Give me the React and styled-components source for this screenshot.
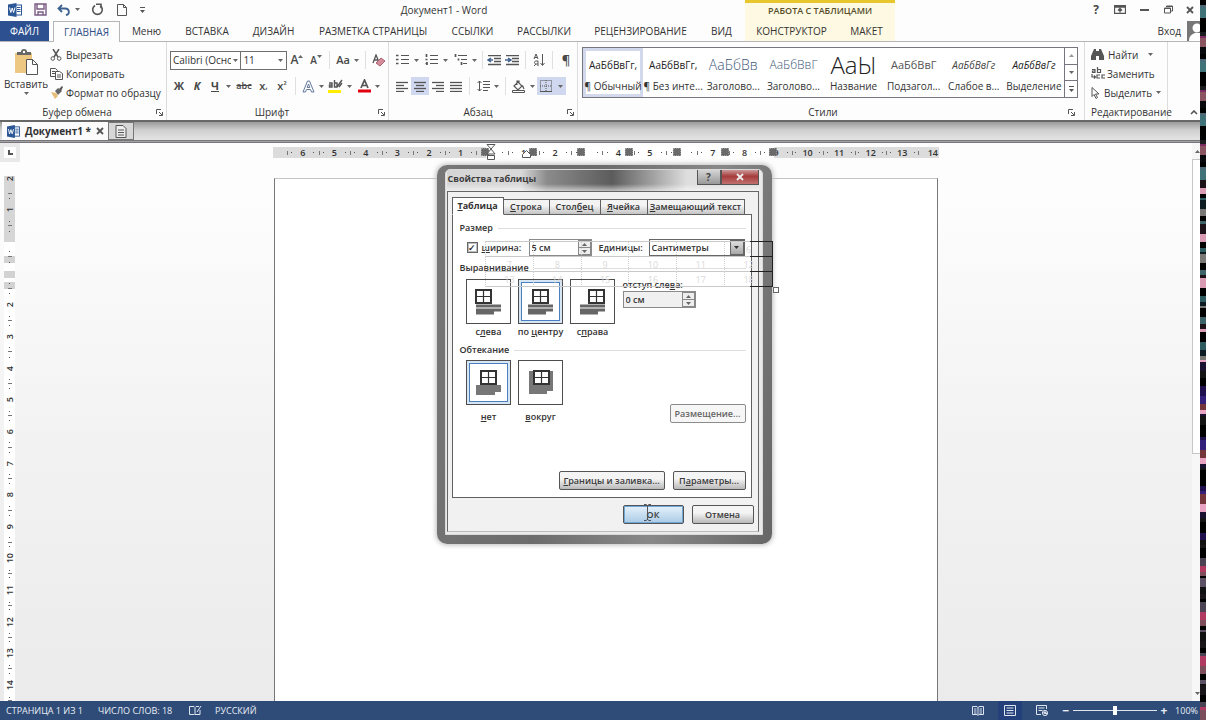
import React from "react";
import styled, { createGlobalStyle, css } from "styled-components";

const Global = createGlobalStyle`
  * { box-sizing: border-box; }
  body { margin: 0; background: #fff; font-family: "Open Sans", "Noto Sans", sans-serif; font-size: 10px; color: #333; }
  button, input, select { font: inherit; color: inherit; margin: 0; padding: 0; border: 0; background: none; border-radius: 0; }
  a { color: inherit; text-decoration: none; }
  fieldset { border: 0; margin: 0; padding: 0; min-width: 0; }
  svg { display: block; flex: none; }
`;

/* ---------- frame ---------- */
const Shell = styled.div`
  display: grid; grid-template-columns: minmax(0, 1fr) 6px; min-height: 100vh; overflow: hidden;
`;
const Window = styled.div`display: flex; flex-direction: column; min-width: 0; background: #fdfdfd;`;
const Edge = styled.div`background: ${p => p.$bands};`;

/* ---------- title bar ---------- */
const TitleBar = styled.header`
  display: grid; grid-template-columns: 143px minmax(0, 1fr) 150px 305px; height: 21px;
`;
const QuickAccess = styled.div`display: flex; align-items: center; padding: 0 0 2px 8px;`;
const TitleText = styled.h1`margin: 0; font-size: 10px; line-height: 21px; font-weight: 400; text-align: center;`;
const ToolHeading = styled.div`
  background: #fef9e2; border-top: 3px solid #e8c72e; font-size: 9px; line-height: 16px; font-weight: 600; text-align: center; color: #574e2b;
`;
const WindowButtons = styled.div`display: flex; align-items: center; justify-content: flex-end; padding-bottom: 2px;`;
const IconButton = styled.button`
  display: flex; align-items: center; justify-content: center; flex: none;
  width: ${p => p.$w || 18}px; height: ${p => p.$h || 18}px;
  background: ${p => (p.$on ? "#cfd8ee" : "transparent")};
`;
const Raised = styled.span`align-self: flex-start; padding-top: 4px;`;

/* ---------- ribbon tabs ---------- */
const TabRow = styled.nav`display: flex; height: 21px; border-bottom: 1px solid #b5b5b5;`;
const RibbonTab = styled.a`
  display: flex; align-items: center; justify-content: center; flex: none; width: ${p => p.$w}px; height: 20px; white-space: nowrap;
  ${p => p.$kind === "file" && css`background: #2c5090; color: #fff; margin-right: 4px;`}
  ${p => p.$kind === "active" && css`height: 21px; background: #fdfdfd; border: 1px solid #b5b5b5; border-bottom: 0; color: #2f4f86;`}
  ${p => p.$kind === "tool" && css`background: #fef9e2;`}
`;
const SignIn = styled.a`margin-left: auto; margin-right: 6px; line-height: 20px;`;

/* ---------- ribbon ---------- */
const Ribbon = styled.section`display: flex; height: 78px; background: #fdfdfd;`;
const Group = styled.section`
  display: flex; flex-direction: column; flex: ${p => (p.$grow ? "1 1 0" : "none")}; min-width: 0;
  width: ${p => (p.$w ? p.$w + "px" : "auto")}; padding: ${p => p.$pad || "5px 0 0 4px"};
  border-right: 1px solid #dcdcdc;
`;
const GroupBody = styled.div`flex: 1; display: flex; flex-direction: ${p => (p.$col ? "column" : "row")};`;
const GroupFoot = styled.footer`display: flex; align-items: center; height: 16px;`;
const GroupName = styled.h2`flex: 1; margin: 0; font-size: 10px; font-weight: 400; text-align: center; white-space: nowrap;`;
const PasteButton = styled.button`display: flex; flex-direction: column; align-items: center; justify-content: flex-start; width: 48px; padding-top: 4px; line-height: 16px;`;
const Commands = styled.div`display: flex; flex-direction: column; align-items: flex-start;`;
const Command = styled.button`
  display: flex; align-items: center; gap: ${p => p.$gap || 2}px; height: 19px; white-space: nowrap;
`;
const ToolRow = styled.div`display: flex; align-items: center; height: 26px;`;
const Divider = styled.i`width: 1px; height: 18px; background: #e0e0e0; margin: 0 ${p => p.$m || 5}px;`;
const Combo = styled.label`
  display: flex; align-items: center; width: ${p => p.$w}px; height: 19px; border: 1px solid #6f6f6f; background: #fff; margin-left: ${p => (p.$join ? -1 : 0)}px;
`;
const ComboInput = styled.input`flex: 1; width: 0; min-width: 0; padding-left: 2px; outline: 0;`;
const Glyph = styled.span`
  font-weight: ${p => (p.$b ? 700 : 600)}; font-style: ${p => (p.$i ? "italic" : "normal")}; font-size: ${p => p.$s || 11}px; line-height: 14px;
  text-decoration: ${p => p.$d || "none"}; color: ${p => p.$c || "#484848"};
`;

const Gallery = styled.div`display: flex; height: 51px; border: 1px solid #76767e; background: #fff;`;
const StyleCard = styled.button`
  display: flex; flex-direction: column; justify-content: flex-start; flex: 1 1 0; min-width: 0; overflow: hidden; padding-top: 4px; text-align: center;
  box-shadow: ${p => (p.$on ? "inset 0 0 0 3px #d3d9ec" : "none")};
`;
const Sample = styled.span`
  display: block; height: 26px; line-height: 26px; margin: 0 5px; overflow: hidden; white-space: nowrap; align-self: stretch;
  font-size: ${p => p.$s || 10}px; font-weight: ${p => p.$wt || 400}; color: ${p => p.$c || "#222"}; font-style: ${p => (p.$i ? "italic" : "normal")};
`;
const StyleName = styled.span`align-self: stretch; line-height: 16px; white-space: nowrap;`;
const GalleryArrows = styled.div`display: flex; flex-direction: column; width: 13px; border-left: 1px solid #76767e;`;
const ArrowCell = styled.button`
  flex: 1; display: flex; align-items: center; justify-content: center;
  & + & { border-top: 1px solid #76767e; }
`;
const Collapse = styled.div`display: flex; align-items: flex-end; justify-content: flex-end; width: 32px;`;

/* ---------- document tabs ---------- */
const DocTabs = styled.nav`
  display: flex; align-items: flex-end; height: 23px; padding-left: 2px; border-top: 2px solid #676767; border-bottom: 3px double #77757b;
  background: linear-gradient(#9a9a9a, #cfcfcf 45%, #e4e4e4);
`;
const DocTab = styled.a`
  display: flex; align-items: center; justify-content: space-between; width: 106px; height: 18px; padding: 0 4px 0 5px; background: #fbfbfb; font-weight: 700; white-space: nowrap;
`;
const NewDoc = styled.button`display: flex; align-items: center; justify-content: center; width: 26px; height: 18px; border: 1px solid #777; background: #d7d7d7;`;

/* ---------- work area ---------- */
const Work = styled.main`
  position: relative; flex: 1; display: flex; background: linear-gradient(#fdfdfd 10%, #f3f3f3 50%, #ebebeb);
`;
const LeftRail = styled.div`display: flex; flex-direction: column; width: 20px;`;
const TabStop = styled.button`
  display: flex; align-items: center; justify-content: center; width: 20px; height: 19px; margin-bottom: 14px; border: 4px solid #e9e9e9; background: #fff;
`;
const VRuler = styled.div`
  flex: 1; display: grid; grid-template-rows: 18px repeat(16, minmax(0, 1fr)); width: 11px; margin-left: 4px; font-size: 9px; font-weight: 600;
  background: linear-gradient(#d6d6d6 66px, #fff 66px 80px, #d2d2d2 80px 87px, #fff 87px 95px, #d2d2d2 95px 102px, #fff 102px 106px, #d2d2d2 106px 113px, #fff 113px);
`;
const VMark = styled.div`
  display: flex; flex-direction: column-reverse; align-items: center; justify-content: ${p => (p.$short ? "flex-end" : "space-around")};
  background: linear-gradient(#777, #777) center bottom / 4px 1px no-repeat;
`;
const VNum = styled.span`writing-mode: vertical-rl; rotate: 180deg; line-height: 11px;`;
const Dot = styled.i`width: 1px; height: 1px; background: #555;`;
const Canvas = styled.div`flex: 1; display: flex; flex-direction: column; align-items: center; min-width: 0;`;
const HRuler = styled.div`
  position: relative; display: grid; grid-template-columns: 14px repeat(20, minmax(0, 1fr)) 20px; width: 666px; max-width: 100%; height: 11px; margin: 4px 0 20px;
  padding-right: 1px; font-size: 9px; font-weight: 600; background: linear-gradient(90deg, #dcdcdc 213px, #fff 213px 501px, #dcdcdc 501px);
`;
const HMark = styled.div`
  display: flex; align-items: center; justify-content: ${p => (p.$end ? "flex-end" : "space-around")}; line-height: 10px;
  background: linear-gradient(#777, #777) left center / 1px 4px no-repeat;
`;
const Columns = styled.div`position: absolute; left: 208px; top: 1px; display: flex; gap: 40px;`;
const ColumnGrip = styled.i`width: 8px; height: 8px; background: #6a6a6a; border: 1px dotted #999;`;
const Indent = styled.div`position: absolute; left: 213px; top: -3px;`;
const FirstIndent = styled.div`position: absolute; left: 249px; top: 3px;`;
const Sheet = styled.article`
  flex: 1; width: 664px; max-width: 100%; padding: 62px 0 0 210px; background: #fff; border: 1px solid #777; border-top-color: #c4c4c4; border-bottom: 0;
`;
const DocTable = styled.table`
  position: relative; z-index: 3; width: 288px; border-collapse: collapse; table-layout: fixed; pointer-events: none; border-right: 1px solid #222;
  font-size: 9px; color: #dadada; text-align: center;
`;
const DocRow = styled.tr`
  background: linear-gradient(90deg, #c9c9c9 264px, #222 264px) left bottom / 288px 1px no-repeat
    ${p => (p.$first ? ", linear-gradient(90deg, #c9c9c9 264px, #222 264px) left top / 288px 1px no-repeat" : "")};
`;
const DocCell = styled.td`height: ${p => (p.$first ? 16 : 15)}px; padding: 0; line-height: 13px; border-left: 1px dotted #d0d0d0;`;
const TableHandle = styled.i`position: relative; z-index: 3; display: block; width: 6px; height: 6px; margin-left: 288px; border: 1px solid #666; background: #fff;`;
const ScrollRail = styled.div`display: flex; flex-direction: column; align-items: flex-end; width: 8px; background: #f7f7f7;`;
const ScrollThumb = styled.div`width: 8px; height: 295px; margin-bottom: auto; border: 1px solid #c6c6c6; border-right: 0; background: #fff;`;

/* ---------- dialog ---------- */
const DialogLayer = styled.div`position: absolute; z-index: 2; inset: 22px 0 auto 0; display: flex; justify-content: center; padding-left: 8px;`;
const Dialog = styled.section`
  width: 335px; padding: 4px 9px 9px 8px; border-radius: 10px; box-shadow: 0 0 5px 1px #bbb;
  background: linear-gradient(100deg, #777, #6c6c6c 40%, #888 70%, #666);
`;
const DialogFrame = styled.div`border: 1px solid #d9d9d9; border-radius: 5px 5px 0 0; background: #eaeaea; padding: 0 3px 2px 1px;`;
const DialogTitle = styled.header`
  display: flex; align-items: flex-start; height: 21px; padding-left: 1px;
  background: linear-gradient(#0000 14px, #fff9), linear-gradient(90deg, #d5d5d5, #d9d9d9 74px, #8b8b8b 100px, #5c5c5c 165px, #a0a0a0 205px, #dedede 240px);
`;
const DialogName = styled.h2`flex: 1; margin: 0; font-size: 9px; line-height: 18px; font-weight: 700; color: #3c3c3c;`;
const CaptionButton = styled.button`
  display: flex; align-items: center; justify-content: center; height: 15px; width: ${p => (p.$close ? 38 : 24)}px; border: 1px solid #555; border-top: 0; font-weight: 700; line-height: 12px;
  color: ${p => (p.$close ? "#fff" : "#444")}; background: ${p => (p.$close ? "linear-gradient(#c99, #a63b3b 45%, #c07070)" : "linear-gradient(#d5d5d5, #999)")};
`;
const DialogBody = styled.div`background: #f1f1f1; border: 1px solid #666; border-bottom-color: #bbb; padding: 5px 4px 7px;`;
const DialogTabs = styled.div`display: flex; align-items: flex-end; height: 18px; margin-bottom: -1px; position: relative;`;
const DialogTab = styled.button`
  width: ${p => p.$w}px; height: ${p => (p.$on ? 18 : 16)}px; border: 1px solid #606060; border-left-width: ${p => (p.$join ? 0 : 1)}px;
  border-bottom-color: ${p => (p.$on ? "#fff" : "#606060")}; font-size: 9px; line-height: 14px; font-weight: ${p => (p.$on ? 700 : 600)}; white-space: nowrap; overflow: hidden;
  background: ${p => (p.$on ? "#fff" : "linear-gradient(#f3f3f3 40%, #c4c4c4)")};
`;
const Panel = styled.div`display: flex; flex-direction: column; width: 300px; height: 284px; padding: 6px 5px 7px 7px; background: #fff; border: 1px solid #606060;`;
const Section = styled.fieldset`height: ${p => p.$h}px;`;
const SectionName = styled.legend`
  display: flex; align-items: center; gap: 5px; width: 100%; height: 14px; padding: 0; font-size: 9px; line-height: 14px; font-weight: 600;
  &::after { content: ""; flex: 1; border-top: 1px solid #dedede; }
`;
const FieldLine = styled.div`display: flex; align-items: center; height: 17px; margin-top: 4px; padding-left: 7px; font-weight: 600;`;
const Check = styled.input`
  appearance: none; width: 11px; height: 11px; margin-right: 4px; border: 1px solid #666;
  background: linear-gradient(#fff, #fff) center / 7px 7px no-repeat, #bbb; position: relative;
  &::after { content: "✓"; position: absolute; inset: 0; font-size: 9px; line-height: 9px; text-align: center; }
`;
const FieldName = styled.label`width: ${p => p.$w}px; padding-left: ${p => p.$in || 0}px; white-space: nowrap; font-size: 9px;`;
const SpinBox = styled.div`
  display: flex; width: ${p => p.$w}px; height: 17px; border: 1px solid #8a8a8a; background: ${p => (p.$dim ? "#f0f0f0" : "#fff")};
`;
const SpinInput = styled.input`flex: 1; width: 0; min-width: 0; padding-left: 2px; font-size: 9px; font-weight: 600;`;
const SpinArrows = styled.div`display: flex; flex-direction: column; width: 13px; border: 1px solid #888; background: #eee;`;
const SpinArrow = styled.button`flex: 1; display: flex; align-items: center; justify-content: center; & + & { border-top: 1px solid #888; }`;
const SelectBox = styled.div`display: flex; align-items: center; width: 96px; height: 17px; border: 1px solid #666; background: #fff;`;
const Select = styled.select`appearance: none; flex: 1; min-width: 0; padding-left: 2px; font-size: 9px; font-weight: 600;`;
const SelectArrow = styled.span`display: flex; align-items: center; justify-content: center; width: 14px; height: 15px; border: 1px solid #666; background: linear-gradient(#e0e0e0, #a8a8a8);`;
const Choices = styled.div`display: flex; gap: 8px; padding-left: 7px; margin-top: ${p => p.$t}px;`;
const Choice = styled.label`display: flex; flex-direction: column; align-items: center; width: 44px; gap: ${p => p.$gap}px; font-size: 9px; line-height: 12px; font-weight: 600; white-space: nowrap;`;
const ChoiceRadio = styled.input`position: absolute; opacity: 0; pointer-events: none;`;
const ChoiceBox = styled.span`
  display: flex; align-items: center; justify-content: center; width: 45px; height: 45px; border: 1px solid #4d4d4d; background: #fff;
  ${p => p.$on && css`box-shadow: inset 0 0 0 2px #d6e6f5, inset 0 0 0 3px #4a80bd;`}
`;
const IndentField = styled.div`display: flex; flex-direction: column; font-size: 9px; line-height: 12px; font-weight: 600; white-space: nowrap;`;
const PushButton = styled.button`
  width: ${p => p.$w}px; height: 19px; border: 1px solid ${p => (p.$dim ? "#8c8c8c" : "#555")}; border-radius: 2px; font-size: 9px; line-height: 15px; font-weight: 600;
  color: ${p => (p.$dim ? "#666" : "#3c3c3c")}; white-space: nowrap;
  background: ${p => (p.$primary ? "linear-gradient(#e6f1fa, #a9cbe6)" : p.$dim ? "#f6f6f6" : "linear-gradient(#f4f4f4 40%, #b9b9b9)")};
  ${p => p.$primary && css`box-shadow: inset 0 0 0 1px #6fa8d6;`}
  ${p => p.$aside && css`align-self: flex-end; margin-left: auto;`}
`;
const ButtonLine = styled.div`display: flex; justify-content: flex-end; gap: 8px; margin-top: ${p => (p.$t ? p.$t + "px" : "auto")};`;
const Pointer = styled.div`position: absolute; left: 50%; top: 361px; z-index: 4; margin-left: 44px;`;

/* ---------- status bar ---------- */
const StatusBar = styled.footer`display: flex; align-items: center; height: 19px; padding: 0 2px 0 6px; background: #2f4c78; color: #e8edf5; font-size: 9px;`;
const StatusItem = styled.span`margin-right: 16px; width: ${p => p.$w}px; white-space: nowrap;`;
const StatusIcon = styled.span`margin-right: 13px;`;
const Spacer = styled.i`flex: 1;`;
const ViewButton = styled.button`display: flex; align-items: center; justify-content: center; width: 24px; height: 19px; margin-right: 8px; background: ${p => (p.$on ? "#24407a" : "transparent")};`;
const Zoom = styled.input`
  appearance: none; width: 84px; height: 11px; margin: 0 3px;
  background: linear-gradient(#dfe6f0, #dfe6f0) center / 100% 1px no-repeat;
  &::-webkit-slider-thumb { appearance: none; width: 4px; height: 9px; background: #fff; }
`;
const ZoomStep = styled.button`width: 8px; font-size: 12px; font-weight: 700; line-height: 14px;`;
const ZoomValue = styled.span`width: 30px; text-align: right;`;

/* ---------- icons ---------- */
const S = ({ w = 16, h = 16, children, ...r }) => (
  <svg width={w} height={h} viewBox={`0 0 ${w} ${h}`} fill="none" stroke="#555" {...r}>{children}</svg>
);
const Caret = ({ up, c = "#666" }) => (
  <S w={5} h={3} stroke="none" fill={c}><path d={up ? "M0 3h5L2.500 0z" : "M0 0h5L2.500 3z"} /></S>
);
const WordLogo = ({ s = 14 }) => (
  <svg width={s} height={s} viewBox="0 0 14 14">
    <rect x="7.500" y="2" width="6" height="10" fill="#fff" stroke="#2b5797" />
    <path d="M9 4.500h3.500M9 6.500h3.500M9 8.500h3.500" stroke="#2b5797" />
    <path d="M0 1.500 8.500 0v14L0 12.500z" fill="#2b5797" />
    <path d="M1.500 4.500 2.800 9.500 4.200 5 5.600 9.500 7 4.500" fill="none" stroke="#fff" />
  </svg>
);
const SaveIcon = () => <S w={13} h={13} stroke="#7a5a83"><path d="M1 1h11v11H1zM3 1v5h7V1M4 12V9h5v3" strokeWidth="1.400" /></S>;
const UndoIcon = () => <S w={14} h={12} stroke="#3e628f" strokeWidth="1.800"><path d="M5 1 1.500 4.500 5 8M2 4.500h6c5 0 5 6 1 6.500" /></S>;
const RedoIcon = () => <S w={13} h={13} strokeWidth="1.600"><path d="M4 2.500A4.800 4.800 0 1 0 9 2.500M5 1.200h5v4" /></S>;
const PageIcon = () => <S w={10} h={12}><path d="M.5.5h6l3 3v8h-9zM6.500.5v3h3" /></S>;
const MoreIcon = () => <S w={5} h={6} fill="#555" stroke="none"><path d="M0 0h5v1H0zM0 3h5L2.500 6z" /></S>;
const DisplayIcon = () => <S w={12} h={9}><path d="M.5.5h11v8H.5zM.5 2h11M6 7.500V4M4 5.500l2-2 2 2" strokeWidth="1.300" /></S>;
const MinIcon = () => <S w={9} h={2}><path d="M0 1h9" strokeWidth="2" /></S>;
const RestoreIcon = () => <S w={9} h={9}><path d="M2.500 2V1h6v5H7M.5 3h6v5h-6zM.5 3.500h6M2.500 1.500h6" /></S>;
const CloseIcon = ({ c = "#555", s = 8 }) => <svg width={s} height={s} viewBox="0 0 8 8" stroke={c} strokeWidth="1.800"><path d="m1 1 6 6M7 1 1 7" /></svg>;
const Avatar = () => <S w={13} h={20} fill="#fff" stroke="none"><path fill="#777" d="M0 0h13v20H0z" /><path d="M2 20c0-5 3-7 6-8h5v8z" /><circle cx="10" cy="7" r="4.500" /></S>;
const PasteIcon = () => (
  <S w={26} h={27}><path d="M2 4h17v20H2z" fill="#ecc883" stroke="none" /><path d="M4 6V3h4a3 3 0 0 1 6 0h4v3z" fill="#666" stroke="none" /><circle cx="11" cy="3" r="1.200" fill="#fff" stroke="none" /><path d="M13.500 10.500h6l5 5v10h-11z" fill="#fff" /><path d="M19.500 10.500v5h5" /></S>
);
const CutIcon = () => <S w={12} h={12}><path d="M3 0l5 8M9 0 4 8" strokeWidth="1.500" /><circle cx="2.800" cy="9.500" r="1.800" /><circle cx="9.200" cy="9.500" r="1.800" /></S>;
const CopyIcon = () => <S w={13} h={12}><path d="M.5.5h5l2 2v6h-7zM2 3.500h3M2 5.500h3" /><path d="M5.500 3.500h4l3 2v6h-7z" fill="#fff" /><path d="M7 7h4M7 9h4" /></S>;
const BrushIcon = () => <S w={13} h={13} stroke="none"><path d="M1 6l5 1 2 3-3 3z" fill="#e7bd77" /><path d="M5 5l3-3 4 3-4 4z" fill="#666" /><path d="M9 3l3-3 1 1-2 4z" fill="#555" /></S>;
const Launch = () => <S w={7} h={7}><path d="M.5 5V.5H5M3 3l3 3M6.500 3v3.500H3" /></S>;
const Lines = ({ rows, w = 12 }) => <S w={w} h={11}>{rows.map(([a, b], i) => <path key={i} d={`M${a} ${i * 3 + 1}.5H${b}`} strokeWidth="1.300" />)}</S>;
const ListIcon = ({ kind }) => (
  <S w={13} h={12}>
    <path d={kind === "multi" ? "M4 1.500h9M7 5.500h6M9 9.500h4" : "M5 1.500h8M5 5.500h8M5 9.500h8"} />
    <path d={kind === "bullet" ? "M0 1.500h2.500M0 5.500h2.500M0 9.500h2.500" : kind === "num" ? "M1.500 0v3M.5 5.500h2M.5 9.500h2M2 8v3" : "M1.500 0v3M4.500 4.500v2M7.500 8v3"} strokeWidth="1.700" />
  </S>
);
const IndentIcon = ({ out }) => <S w={14} h={11}><path d="M1 .5h13M7 3.500h7M7 6.500h7M1 9.500h13" strokeWidth="1.300" /><path d={out ? "M4 3 1 5l3 2M1 5h5" : "M3 3l3 2-3 2M0 5h6"} stroke="#41618d" strokeWidth="1.500" /></S>;
const SortIcon = () => <S w={12} h={14}><path d="M1 6l2-5 2 5M1.500 4.500h3M5 13V8H3c-2 0-2 3 0 3h2M3 11l-2 2M9.500 1v11M7.500 10l2 2.500 2-2.500" /></S>;
const SpacingIcon = () => <S w={13} h={12}><path d="M6 1.500h7M6 4.500h7M6 7.500h7M6 10.500h5M2.500 1v10M.5 3l2-2 2 2M.5 9l2 2 2-2" /></S>;
const BucketIcon = () => <S w={14} h={13}><path d="M2 6l4-4 4 4-4 4zM5 5V1h2v3M10.500 5.500l1.500 3.500" strokeWidth="1.200" /><path d="M.5 10.500h12v2H.5z" fill="#fff" /></S>;
const BorderIcon = () => <S w={12} h={12}><path d="M.5.5h11v11H.5zM6 0v12M0 6h12" strokeDasharray="1 1" /><path d="M0 11.500h12" /></S>;
const EraserIcon = () => <S w={13} h={13}><path d="M1 9 4 1l3 7M2 6h4" strokeWidth="1.300" /><path d="M4 9l5-5 4 3-5 5z" fill="#d58d9c" stroke="#a8616f" /></S>;
const GlowIcon = () => <S w={13} h={13} stroke="#62799a"><path d="M1 12 5.500 1h2L12 12H9.500L8.500 9.500h-4L3.500 12zM5.200 7.500h2.600L6.500 4z" /></S>;
const MarkerIcon = () => <S w={15} h={14}><path d="M0 11h13v3H0z" fill="#ffed00" stroke="none" /><path d="M1 4h3v4H1.500V6H4M6.500 1v7H9V4H6.500M9 8l5-7M11 8l3-4" strokeWidth="1.400" /></S>;
const FontColorIcon = () => <S w={13} h={14}><path d="M0 10.500h13v3H0z" fill="#e00010" stroke="none" /><path d="M3 9 6.500 1 10 9M4.500 6.500h4" strokeWidth="1.700" /></S>;
const FindIcon = () => <S w={13} h={11} fill="#555" stroke="none"><path d="M3 0h2v2h3V0h2l3 7v4H8V7H5v4H0V7z" /></S>;
const ReplaceIcon = () => <S w={14} h={13}><path d="M1 2.500h3v3H1.500V4H4M6.500 0v5.500h3v-3h-3M9 8H6v3h3M14 8h-3v3h3M1 7v3h3M3 8.500 4.500 10 3 11.500" strokeWidth="1.200" /></S>;
const ArrowIcon = () => <S w={9} h={12}><path d="M1 .5v9l2-2 2 4 1.500-1-2-3.500H8z" /></S>;
const DocIcon = () => <S w={12} h={13}><path d="M1 .5h7l3 3v9H1z" fill="#eee" /><path d="M3 5h6M3 7.500h6M3 10h6" /></S>;
const Grid = ({ x, y }) => <g stroke="#333" fill="#fff"><rect x={x} y={y} width="15" height="13" strokeWidth="2" /><path d={`M${x + 7.5} ${y}v13M${x} ${y + 6.5}h15`} strokeWidth="1.200" /></g>;
const ChoiceArt = ({ kind }) => {
  const x = { left: 1, center: 6, right: 10, none: 6, around: 7 }[kind];
  return (
    <S w={28} h={28} stroke="#666">
      {kind === "around" && <path d="M2 2h24v20h-6v3H2z" fill="#777" stroke="none" />}
      {kind === "none" && <path d="M1 16h25v7h-6v3H1z" fill="#777" stroke="none" />}
      {!["around", "none"].includes(kind) && <path d="M1 18h25M1 22h25M1 25h18" strokeWidth="2.800" />}
      <Grid x={x} y={2} />
    </S>
  );
};
const ReadIcon = () => <S w={12} h={11} stroke="#dfe6f0"><path d="M.5 1.500H5l1 1 1-1h4.500v8H7l-1 1-1-1H.5zM6 2v8M2 4h2.500M2 6h2.500M2 8h2.500M7.500 4H10M7.500 6H10M7.500 8H10" /></S>;
const PrintViewIcon = () => <S w={12} h={11} stroke="#dfe6f0"><path d="M.5.5h11v10H.5zM2.500 3h7M2.500 5.500h7M2.500 8h7" /></S>;
const WebViewIcon = () => <S w={13} h={12} stroke="#dfe6f0"><path d="M5 9.500H.5v-9h10V4M2.500 3h6M2.500 5.500h4" /><circle cx="9" cy="8" r="2.600" /><path d="M7.500 8l1.500-1.500L11 9z" fill="#dfe6f0" /></S>;
const ProofIcon = () => <S w={13} h={11} stroke="#dfe6f0"><path d="M5 9.500H.5v-8H5l1 1 1-1h3M6 3v7M6 9.500h5V5M8 7l4-6" /></S>;

/* ---------- data ---------- */
const TABS = [["Меню", 53], ["ВСТАВКА", 68], ["ДИЗАЙН", 65], ["РАЗМЕТКА СТРАНИЦЫ", 134], ["ССЫЛКИ", 65], ["РАССЫЛКИ", 78], ["РЕЦЕНЗИРОВАНИЕ", 115], ["ВИД", 47]];
const STYLES = [
  ["АаБбВвГг,", "¶ Обычный", {}], ["АаБбВвГг,", "¶ Без инте...", {}],
  ["АаБбВв", "Заголово...", { $s: 14, $wt: 300, $c: "#41597a" }], ["АаБбВвГ", "Заголово...", { $s: 12, $wt: 300, $c: "#41597a" }],
  ["АаЫ", "Название", { $s: 24, $wt: 300 }], ["АаБбВвГ", "Подзагол...", { $s: 11, $c: "#555" }],
  ["АаБбВвГг", "Слабое в...", { $i: true, $c: "#444" }], ["АаБбВвГг", "Выделение", { $i: true }],
];
const H_NUMS = ["6", "5", "4", "3", "2", "1", "", "1", "2", "", "4", "5", "", "7", "8", "9", "10", "11", "12", "13"];
const V_NUMS = ["1", "", "", "2", "3", "4", "5", "6", "7", "8", "9", "10", "11", "12", "13", "14"];
const ROWS = [["", "", "", "", "", "6"], ["7", "8", "9", "10", "11", "12"], ["13", "14", "15", "16", "17", "18"]];
const TONES = [
  ["#000", "#3f7377", "#000", "#7d2c63", "#08090c", "#4a6a78", "#000", "#1b1c1e", "#8a5560"],
  ["#000", "#3c6468", "#0d1b22", "#d99ab4", "#000", "#2e5c60", "#1c1217", "#7a7874"],
  ["#000", "#1b1130", "#32207a", "#000", "#e9a3c2", "#20104e", "#141414", "#74363a"],
  ["#000", "#4a4353", "#111", "#7c4e5c", "#000", "#5b5064", "#b03a62", "#191519"],
];
const bands = (() => {
  let y = 0, i = 0;
  const out = [];
  while (y < 720) {
    const set = TONES[Math.floor(y / 180)];
    const h = 2 + ((i * 7 + 3) % 9);
    out.push(`${set[(i * 5) % set.length]} ${y}px ${y + h}px`);
    y += h;
    i += 1;
  }
  return `linear-gradient(${out.join(",")})`;
})();

const Drop = ({ w = 9, ...r }) => <IconButton $w={w} aria-label="Ещё" {...r}><Caret /></IconButton>;
const Foot = ({ name, launch }) => (
  <GroupFoot><GroupName>{name}</GroupName>{launch && <IconButton $w={14} $h={14} aria-label={name}><Launch /></IconButton>}</GroupFoot>
);
const Spin = ({ id, value, w, dim }) => (
  <SpinBox $w={w} $dim={dim}>
    <SpinInput id={id} defaultValue={value} />
    <SpinArrows><SpinArrow aria-label="Больше"><Caret up /></SpinArrow><SpinArrow aria-label="Меньше"><Caret /></SpinArrow></SpinArrows>
  </SpinBox>
);
const Option = ({ group, kind, on, gap, children }) => (
  <Choice $gap={gap}>
    <ChoiceRadio type="radio" name={group} defaultChecked={on} />
    <ChoiceBox $on={on}><ChoiceArt kind={kind} /></ChoiceBox>
    <span>{children}</span>
  </Choice>
);

function RibbonBar() {
  return (
    <Ribbon>
      <Group $w={167} $pad="3px 0 0 2px">
        <GroupBody>
          <PasteButton><PasteIcon />Вставить<Caret /></PasteButton>
          <Commands>
            <Command $gap={4}><CutIcon />Вырезать</Command>
            <Command $gap={3}><CopyIcon />Копировать</Command>
            <Command $gap={3}><BrushIcon />Формат по образцу</Command>
          </Commands>
        </GroupBody>
        <Foot name="Буфер обмена" launch />
      </Group>
      <Group $w={222} $pad="5px 0 0 3px">
        <GroupBody $col>
          <ToolRow>
            <Combo $w={72}><ComboInput aria-label="Шрифт" defaultValue="Calibri (Основной текст)" /><Drop /></Combo>
            <Combo $w={47} $join><ComboInput aria-label="Размер" defaultValue="11" /><Drop w={12} /></Combo>
            <IconButton $w={20} aria-label="Увеличить"><Glyph $s={12}>А</Glyph><Raised><Caret up /></Raised></IconButton>
            <IconButton aria-label="Уменьшить"><Glyph $s={10}>А</Glyph><Raised><Caret /></Raised></IconButton>
            <Divider $m={4} />
            <IconButton aria-label="Регистр"><Glyph>Aa</Glyph></IconButton><Drop />
            <Divider $m={4} />
            <IconButton aria-label="Очистить формат"><EraserIcon /></IconButton>
          </ToolRow>
          <ToolRow>
            <IconButton><Glyph $b>Ж</Glyph></IconButton>
            <IconButton><Glyph $b $i>К</Glyph></IconButton>
            <IconButton><Glyph $b $d="underline">Ч</Glyph></IconButton><Drop />
            <IconButton $w={22}><Glyph $s={9} $d="line-through">abc</Glyph></IconButton>
            <IconButton $w={17}><Glyph>x</Glyph><Glyph $s={9}>,</Glyph></IconButton>
            <IconButton $w={20}><Glyph>x</Glyph><Glyph $s={9}>²</Glyph></IconButton>
            <Divider $m={3} />
            <IconButton aria-label="Эффекты"><GlowIcon /></IconButton><Drop />
            <IconButton aria-label="Выделение"><MarkerIcon /></IconButton><Drop w={11} />
            <IconButton aria-label="Цвет"><FontColorIcon /></IconButton><Drop />
          </ToolRow>
        </GroupBody>
        <Foot name="Шрифт" launch />
      </Group>
      <Group $w={189} $pad="5px 0 0 4px">
        <GroupBody $col>
          <ToolRow>
            <IconButton aria-label="Маркеры"><ListIcon kind="bullet" /></IconButton><Drop w={11} />
            <IconButton aria-label="Нумерация"><ListIcon kind="num" /></IconButton><Drop w={11} />
            <IconButton aria-label="Многоуровневый"><ListIcon kind="multi" /></IconButton><Drop w={11} />
            <Divider $m={2} />
            <IconButton aria-label="Меньше отступ"><IndentIcon out /></IconButton>
            <IconButton aria-label="Больше отступ"><IndentIcon /></IconButton>
            <Divider $m={4} />
            <IconButton aria-label="Сортировка"><SortIcon /></IconButton>
            <Divider $m={4} />
            <IconButton><Glyph $s={13}>¶</Glyph></IconButton>
          </ToolRow>
          <ToolRow>
            <IconButton aria-label="По левому краю"><Lines rows={[[0, 12], [0, 8], [0, 12], [0, 8]]} /></IconButton>
            <IconButton $on aria-label="По центру"><Lines rows={[[0, 12], [2, 10], [0, 12], [2, 10]]} /></IconButton>
            <IconButton aria-label="По правому краю"><Lines rows={[[0, 12], [4, 12], [0, 12], [4, 12]]} /></IconButton>
            <IconButton aria-label="По ширине"><Lines rows={[[0, 12], [0, 12], [0, 12], [0, 12]]} /></IconButton>
            <Divider $m={4} />
            <IconButton aria-label="Интервал"><SpacingIcon /></IconButton><Drop />
            <Divider $m={4} />
            <IconButton aria-label="Заливка"><BucketIcon /></IconButton><Drop />
            <IconButton $on aria-label="Границы"><BorderIcon /></IconButton><Drop w={11} $on />
          </ToolRow>
        </GroupBody>
        <Foot name="Абзац" launch />
      </Group>
      <Group $grow $pad="5px 6px 0 4px">
        <GroupBody $col>
          <Gallery>
            {STYLES.map(([t, n, s], i) => (
              <StyleCard key={i} $on={i === 0}><Sample {...s}>{t}</Sample><StyleName>{n}</StyleName></StyleCard>
            ))}
            <GalleryArrows>
              <ArrowCell aria-label="Вверх"><Caret up c="#999" /></ArrowCell>
              <ArrowCell aria-label="Вниз"><Caret /></ArrowCell>
              <ArrowCell aria-label="Все стили"><MoreIcon /></ArrowCell>
            </GalleryArrows>
          </Gallery>
        </GroupBody>
        <Foot name="Стили" launch />
      </Group>
      <Group $w={83} $pad="3px 0 0 6px">
        <GroupBody $col>
          <Command $gap={4}><FindIcon />Найти&nbsp;&nbsp;<Caret /></Command>
          <Command><ReplaceIcon />Заменить</Command>
          <Command $gap={4}><ArrowIcon />Выделить<Caret /></Command>
        </GroupBody>
        <Foot name="Редактирование" />
      </Group>
      <Collapse><IconButton $w={12} $h={15} aria-label="Свернуть"><S w={8} h={5}><path d="M1 4l3-3 3 3" strokeWidth="1.600" /></S></IconButton></Collapse>
    </Ribbon>
  );
}

function TableDialog() {
  return (
    <DialogLayer>
      <Dialog role="dialog" aria-labelledby="dlg">
        <DialogFrame>
          <DialogTitle>
            <DialogName id="dlg">Свойства таблицы</DialogName>
            <CaptionButton>?</CaptionButton>
            <CaptionButton $close aria-label="Закрыть"><CloseIcon c="#eee" /></CaptionButton>
          </DialogTitle>
          <DialogBody>
            <DialogTabs>
              <DialogTab $w={52} $on><u>Т</u>аблица</DialogTab>
              <DialogTab $w={46} $join><u>С</u>трока</DialogTab>
              <DialogTab $w={51} $join>Стол<u>б</u>ец</DialogTab>
              <DialogTab $w={47} $join><u>Я</u>чейка</DialogTab>
              <DialogTab $w={97} $join><u>З</u>амещающий текст</DialogTab>
            </DialogTabs>
            <Panel>
              <Section $h={40}>
                <SectionName>Размер</SectionName>
                <FieldLine>
                  <Check type="checkbox" id="wOn" defaultChecked />
                  <FieldName $w={47} htmlFor="wOn"><u>ш</u>ирина:</FieldName>
                  <Spin id="w" value="5 см" w={63} />
                  <FieldName $w={57} $in={7} htmlFor="units">Е<u>д</u>иницы:</FieldName>
                  <SelectBox>
                    <Select id="units" defaultValue="cm"><option value="cm">Сантиметры</option></Select>
                    <SelectArrow><Caret c="#333" /></SelectArrow>
                  </SelectBox>
                </FieldLine>
              </Section>
              <Section $h={82}>
                <SectionName>Выравнивание</SectionName>
                <Choices $t={4}>
                  <Option group="align" kind="left" gap={2}>с<u>л</u>ева</Option>
                  <Option group="align" kind="center" gap={2} on>по <u>ц</u>ентру</Option>
                  <Option group="align" kind="right" gap={2}>с<u>п</u>рава</Option>
                  <IndentField><label htmlFor="ind">отступ сле<u>в</u>а:</label><Spin id="ind" value="0 см" w={73} dim /></IndentField>
                </Choices>
              </Section>
              <Section $h={81}>
                <SectionName>Обтекание</SectionName>
                <Choices $t={3}>
                  <Option group="wrap" kind="none" gap={6} on><u>н</u>ет</Option>
                  <Option group="wrap" kind="around" gap={6}><u>в</u>округ</Option>
                  <PushButton $w={76} $dim $aside>Размещение...</PushButton>
                </Choices>
              </Section>
              <ButtonLine>
                <PushButton $w={106}><u>Г</u>раницы и заливка...</PushButton>
                <PushButton $w={73}>П<u>а</u>раметры...</PushButton>
              </ButtonLine>
            </Panel>
            <ButtonLine $t={7}>
              <PushButton $w={61} $primary>ОК</PushButton>
              <PushButton $w={62}>Отмена</PushButton>
            </ButtonLine>
          </DialogBody>
        </DialogFrame>
      </Dialog>
    </DialogLayer>
  );
}

export default function App() {
  return (
    <Shell>
      <Global />
      <Window>
        <TitleBar>
          <QuickAccess>
            <WordLogo />
            <IconButton $w={36} aria-label="Сохранить"><SaveIcon /></IconButton>
            <IconButton $w={12} aria-label="Отменить"><UndoIcon /></IconButton>
            <Drop w={14} />
            <IconButton $w={26} aria-label="Повторить"><RedoIcon /></IconButton>
            <IconButton $w={24} aria-label="Создать"><PageIcon /></IconButton>
            <IconButton $w={16} aria-label="Настроить"><MoreIcon /></IconButton>
          </QuickAccess>
          <TitleText>Документ1 - Word</TitleText>
          <ToolHeading>РАБОТА С ТАБЛИЦАМИ</ToolHeading>
          <WindowButtons>
            <IconButton $w={24}><Glyph $b $s={12}>?</Glyph></IconButton>
            <IconButton $w={24} aria-label="Лента"><DisplayIcon /></IconButton>
            <IconButton $w={24} aria-label="Свернуть"><MinIcon /></IconButton>
            <IconButton $w={24} aria-label="Восстановить"><RestoreIcon /></IconButton>
            <IconButton $w={20} aria-label="Закрыть"><CloseIcon /></IconButton>
          </WindowButtons>
        </TitleBar>
        <TabRow>
          <RibbonTab href="#file" $w={49} $kind="file">ФАЙЛ</RibbonTab>
          <RibbonTab href="#home" $w={67} $kind="active">ГЛАВНАЯ</RibbonTab>
          {TABS.map(([t, w]) => <RibbonTab key={t} href="#tab" $w={w}>{t}</RibbonTab>)}
          <RibbonTab href="#design" $w={93} $kind="tool">КОНСТРУКТОР</RibbonTab>
          <RibbonTab href="#layout" $w={57} $kind="tool">МАКЕТ</RibbonTab>
          <SignIn href="#signin">Вход</SignIn>
          <Avatar />
        </TabRow>
        <RibbonBar />
        <DocTabs>
          <DocTab href="#doc"><WordLogo s={13} />Документ1 *<CloseIcon /></DocTab>
          <NewDoc aria-label="Новый документ"><DocIcon /></NewDoc>
        </DocTabs>
        <Work>
          <LeftRail>
            <TabStop aria-label="Табуляция"><S w={5} h={5}><path d="M1 0v4h4" strokeWidth="2" /></S></TabStop>
            <VRuler>
              <VMark $short><VNum>2</VNum></VMark>
              {V_NUMS.map((n, i) => <VMark key={i}><Dot /><VNum>{n}</VNum><Dot /></VMark>)}
            </VRuler>
          </LeftRail>
          <Canvas>
            <HRuler>
              <span />
              {H_NUMS.map((n, i) => <HMark key={i}><Dot /><span>{n}</span><Dot /></HMark>)}
              <HMark $end>14</HMark>
              <Columns>{ROWS[1].concat("end").map(k => <ColumnGrip key={k} />)}</Columns>
              <Indent><S w={10} h={16} fill="#fff"><path d="M1 .5h8L5 5zM5 5l4 5H1zM1.500 11.500h7v4h-7z" /></S></Indent>
              <FirstIndent><S w={9} h={8} fill="#fff"><path d="M4.500.5l4 4v3h-8v-3z" /></S></FirstIndent>
            </HRuler>
            <Sheet>
              <DocTable>
                <tbody>
                  {ROWS.map((r, i) => (
                    <DocRow key={i} $first={i === 0}>{r.map((c, j) => <DocCell key={j} $first={i === 0}>{c}</DocCell>)}</DocRow>
                  ))}
                </tbody>
              </DocTable>
              <TableHandle />
            </Sheet>
          </Canvas>
          <ScrollRail>
            <IconButton $w={6} $h={16} aria-label="Вверх"><Caret up /></IconButton>
            <ScrollThumb />
            <IconButton $w={6} $h={16} aria-label="Вниз"><Caret /></IconButton>
          </ScrollRail>
          <TableDialog />
          <Pointer><S w={7} h={17}><path d="M0 .5h2l1.500 1 1.500-1h2M3.500 1v15M0 16.500h2l1.500-1 1.500 1h2" /></S></Pointer>
        </Work>
        <StatusBar>
          <StatusItem $w={76}>СТРАНИЦА 1 ИЗ 1</StatusItem>
          <StatusItem $w={75}>ЧИСЛО СЛОВ: 18</StatusItem>
          <StatusIcon><ProofIcon /></StatusIcon>
          <StatusItem $w={42}>РУССКИЙ</StatusItem>
          <Spacer />
          <ViewButton aria-label="Чтение"><ReadIcon /></ViewButton>
          <ViewButton $on aria-label="Разметка"><PrintViewIcon /></ViewButton>
          <ViewButton aria-label="Веб"><WebViewIcon /></ViewButton>
          <ZoomStep>−</ZoomStep>
          <Zoom type="range" aria-label="Масштаб" defaultValue={50} />
          <ZoomStep>+</ZoomStep>
          <ZoomValue>100%</ZoomValue>
        </StatusBar>
      </Window>
      <Edge $bands={bands} />
    </Shell>
  );
}
